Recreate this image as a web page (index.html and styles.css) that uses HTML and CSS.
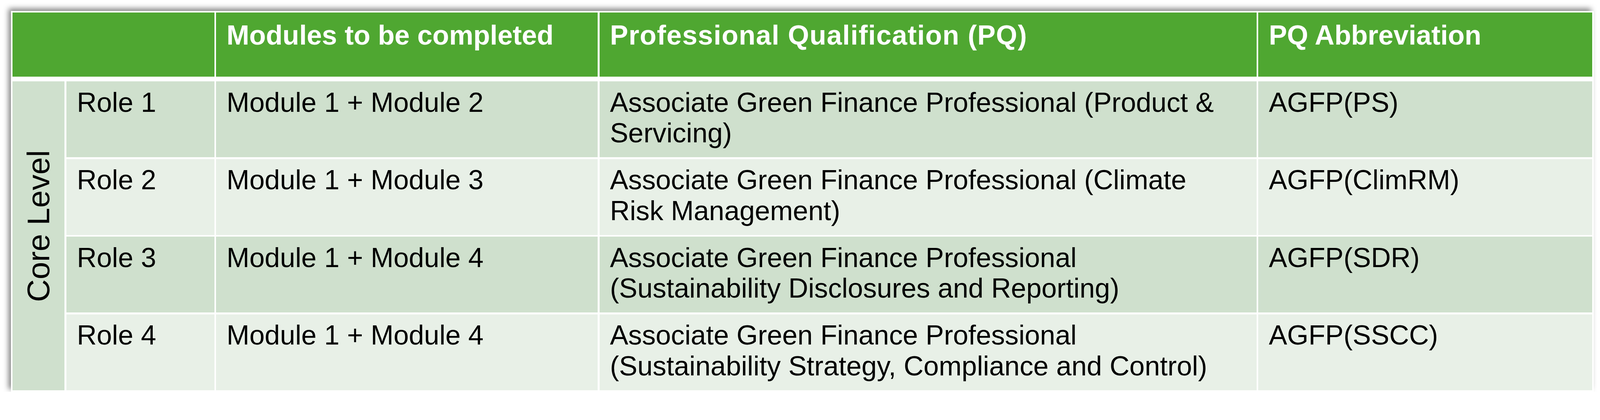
FILE: index.html
```html
<!DOCTYPE html>
<html lang="en">
<head>
<meta charset="utf-8">
<title>Green Finance Professional Qualifications</title>
<link rel="stylesheet" href="styles.css">
</head>
<body>
<div class="page">
  <div class="table">
    <div class="cell head span2"></div>
    <div class="cell head">Modules to be completed</div>
    <div class="cell head wide">Professional Qualification (PQ)</div>
    <div class="cell head">PQ Abbreviation</div>

    <div class="cell core"><span class="core-text">Core Level</span></div>

    <div class="cell odd">Role 1</div>
    <div class="cell odd">Module 1 + Module 2</div>
    <div class="cell odd">Associate Green Finance Professional (Product &amp;<br>Servicing)</div>
    <div class="cell odd">AGFP(PS)</div>

    <div class="cell even">Role 2</div>
    <div class="cell even">Module 1 + Module 3</div>
    <div class="cell even">Associate Green Finance Professional (Climate<br>Risk Management)</div>
    <div class="cell even">AGFP(ClimRM)</div>

    <div class="cell odd">Role 3</div>
    <div class="cell odd">Module 1 + Module 4</div>
    <div class="cell odd">Associate Green Finance Professional<br>(Sustainability Disclosures and Reporting)</div>
    <div class="cell odd">AGFP(SDR)</div>

    <div class="cell even">Role 4</div>
    <div class="cell even">Module 1 + Module 4</div>
    <div class="cell even">Associate Green Finance Professional<br>(Sustainability Strategy, Compliance and Control)</div>
    <div class="cell even">AGFP(SSCC)</div>
  </div>
</div>
</body>
</html>
```

FILE: styles.css
```css
:root {
  --u: calc(100vw / 4286);
}

html, body {
  margin: 0;
  padding: 0;
  background: #ffffff;
  overflow: hidden;
}

.page {
  padding: calc(29 * var(--u)) 0 0 calc(29 * var(--u));
  font-family: "Liberation Sans", Arial, sans-serif;
}

.table {
  display: grid;
  grid-template-columns:
    calc(140 * var(--u))
    calc(396 * var(--u))
    calc(1022 * var(--u))
    calc(1760 * var(--u))
    calc(894 * var(--u));
  grid-template-rows: calc(180 * var(--u)) repeat(4, 1fr);
  gap: calc(5 * var(--u));
  width: fit-content;
  height: calc(1011 * var(--u));
  padding: calc(4 * var(--u));
  background: #ffffff;
  box-shadow: calc(-6 * var(--u)) calc(-6 * var(--u)) calc(14 * var(--u)) rgba(0, 0, 0, 0.5);
}

.cell {
  padding: calc(15 * var(--u)) calc(28 * var(--u)) 0 calc(28 * var(--u));
  font-size: calc(73.5 * var(--u));
  line-height: calc(82 * var(--u));
  color: #000000;
}

.head {
  background: #4fa731;
  color: #ffffff;
  font-weight: bold;
  font-size: calc(73 * var(--u));
  line-height: calc(80 * var(--u));
  padding-top: calc(21 * var(--u));
  border-bottom: calc(9 * var(--u)) solid #ffffff;
}

.wide {
  letter-spacing: calc(1.4 * var(--u));
}

.span2 {
  grid-column: 1 / span 2;
}

.odd {
  background: #cfe0cd;
}

.even {
  background: #e8f0e7;
}

.core {
  grid-row: 2 / span 4;
  background: #cfe0cd;
  padding: 0 0 calc(52 * var(--u)) 0;
  display: flex;
  align-items: center;
  justify-content: center;
}

.core-text {
  writing-mode: vertical-rl;
  transform: rotate(180deg);
  font-size: calc(84 * var(--u));
  line-height: 1;
  white-space: nowrap;
}
```
